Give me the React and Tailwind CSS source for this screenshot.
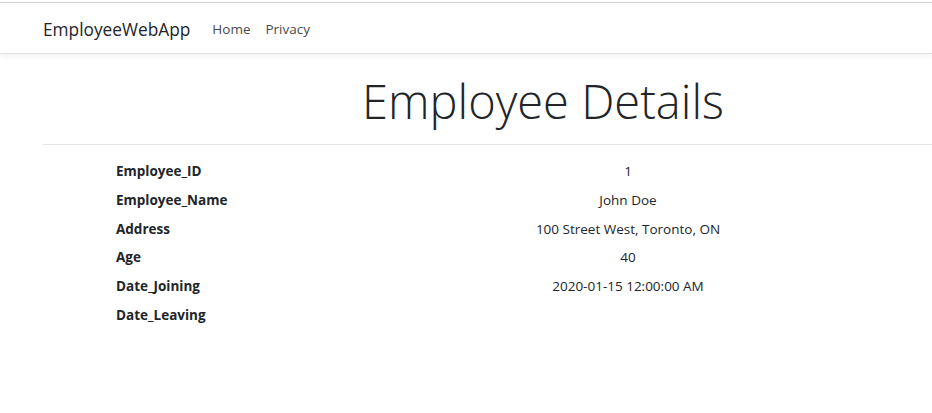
export default function App() {
  const rows = [
    ["Employee_ID", "1"],
    ["Employee_Name", "John Doe"],
    ["Address", "100 Street West, Toronto, ON"],
    ["Age", "40"],
    ["Date_Joining", "2020-01-15 12:00:00 AM"],
    ["Date_Leaving", ""],
  ];
  return (
    <div
      className="w-[932px] h-[413px] overflow-hidden bg-white text-[#212529]"
      style={{ fontFamily: '"Open Sans", "Noto Sans", sans-serif' }}
    >
      <div className="h-[2px] bg-white" />
      <div className="h-[1px] bg-[#d4d4d4]" />
      <nav className="h-[51px] border-b border-[#dee2e6] bg-white flex items-center pt-[3px] pl-[43px] shadow-[0_3px_6px_rgba(0,0,0,0.05)]">
        <span className="text-[17.3px] text-[#212529] mr-[22px]">EmployeeWebApp</span>
        <span className="text-[13.5px] text-[#4a4a4a] mr-[15px]">Home</span>
        <span className="text-[13.5px] text-[#4a4a4a]">Privacy</span>
      </nav>
      <div className="ml-[43px] w-[1000px]">
        <h1 className="text-center text-[47px] font-light leading-none pt-[24px] pb-[19px] text-[#212529]">
          Employee Details
        </h1>
        <div className="border-t border-[#e3e3e3]" />
        <div className="pt-[16px]">
          {rows.map(([k, v]) => (
            <div key={k} className="flex h-[28.8px] items-start text-[13.5px]">
              <div className="w-[100px] ml-[73px] font-bold">{k}</div>
              <div className="w-[824px] text-center">{v}</div>
            </div>
          ))}
        </div>
      </div>
    </div>
  );
}
